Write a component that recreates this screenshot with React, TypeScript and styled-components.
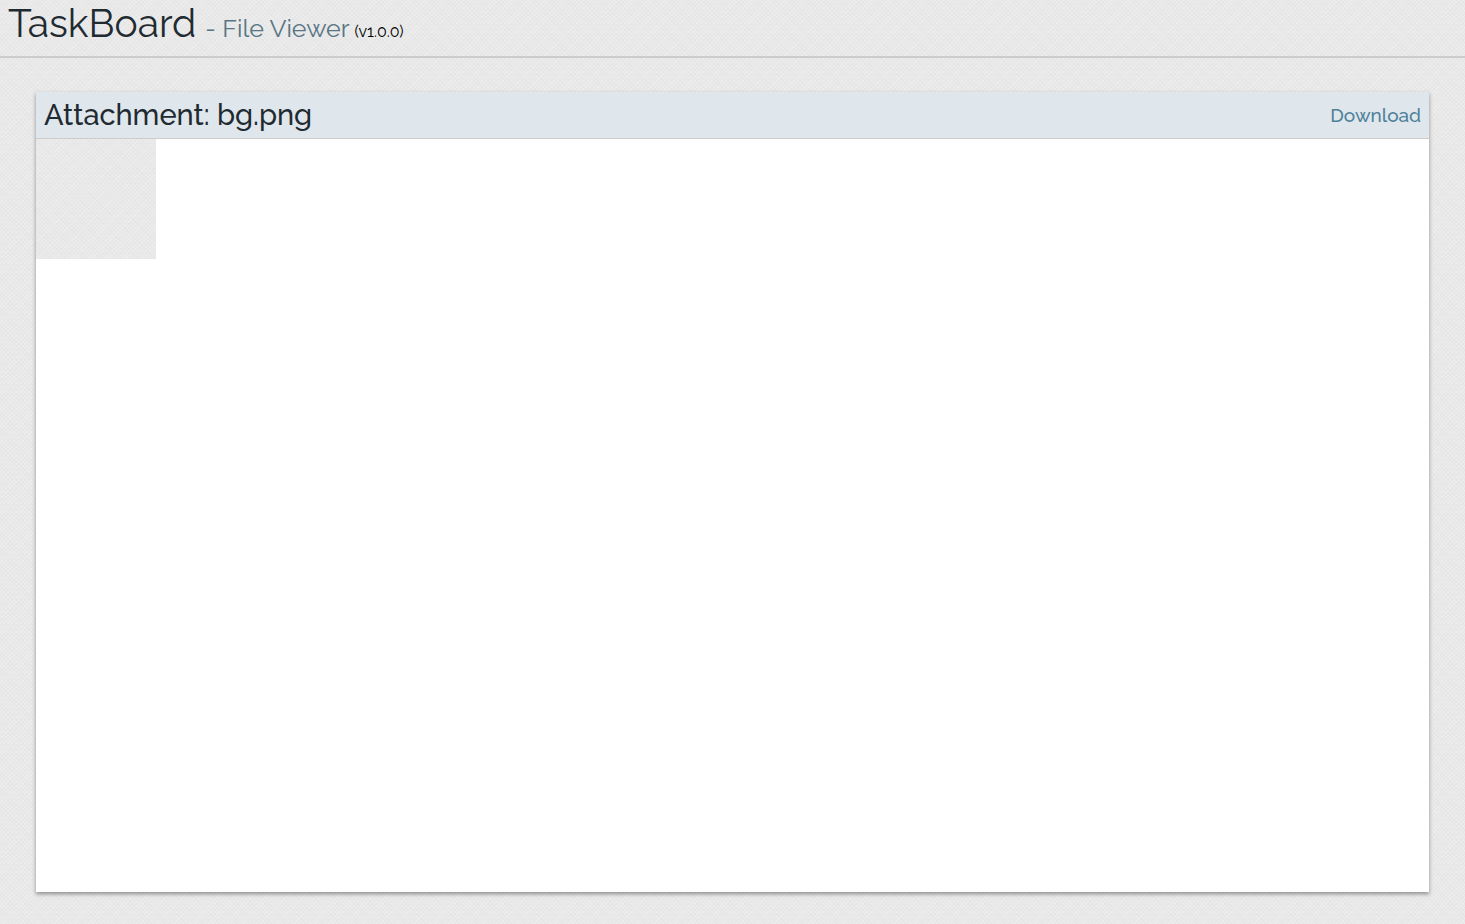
import React from "react";
import styled, { createGlobalStyle, css } from "styled-components";

const weave = css`
  background-color: #e9e9e9;
  background-image:
    repeating-linear-gradient(45deg, rgba(0, 0, 0, 0.014) 0 1px, transparent 1px 3px),
    repeating-linear-gradient(-45deg, rgba(255, 255, 255, 0.2) 0 1px, transparent 1px 3px),
    repeating-linear-gradient(0deg, rgba(0, 0, 0, 0.008) 0 1px, transparent 1px 5px);
  background-size: 120px 120px;
`;

const GlobalStyle = createGlobalStyle`
  *, *::before, *::after { box-sizing: border-box; }
  body {
    margin: 0;
    font-family: Raleway, Lato, "Liberation Sans", sans-serif;
    font-weight: 400;
    color: #1f2b31;
    ${weave}
  }
`;

const Page = styled.div`
  display: flex;
  flex-direction: column;
  min-height: 100vh;
`;

const TopBar = styled.header`
  display: flex;
  align-items: baseline;
  height: 58px;
  padding: 0 8px;
  border-bottom: 2px solid #cccccc;
  white-space: nowrap;
`;

const Brand = styled.h1`
  margin: 0;
  font-size: 39px;
  font-weight: 400;
  line-height: 47px;
`;

const Section = styled.span`
  margin-left: 9px;
  font-size: 25px;
  color: #587584;
`;

const Version = styled.small`
  margin-left: 5px;
  font-size: 16px;
  color: #000000;
`;

const Panel = styled.main`
  display: flex;
  flex: 1;
  flex-direction: column;
  margin: 34px 36px 32px;
  background: #ffffff;
  box-shadow: 0 2px 4px rgba(0, 0, 0, 0.4);
`;

const PanelHeader = styled.div`
  display: flex;
  align-items: center;
  justify-content: space-between;
  height: 47px;
  padding: 0 8px;
  background: #dfe7ed;
  border-bottom: 1px solid #cccccc;
`;

const FileTitle = styled.h2`
  margin: 0;
  font-size: 29px;
  font-weight: 500;
  line-height: 40px;
`;

const DownloadLink = styled.a`
  font-size: 19px;
  font-weight: 500;
  line-height: 28px;
  color: #4f819a;
  text-decoration: none;

  &:hover {
    text-decoration: underline;
  }
`;

const Preview = styled.div`
  width: 120px;
  height: 120px;
  ${weave}
`;

export default function App() {
  return (
    <>
      <GlobalStyle />
      <Page>
        <TopBar>
          <Brand>TaskBoard</Brand>
          <Section>- File Viewer</Section>
          <Version>(v1.0.0)</Version>
        </TopBar>
        <Panel>
          <PanelHeader>
            <FileTitle id="file-title">Attachment: bg.png</FileTitle>
            <DownloadLink href="#download">Download</DownloadLink>
          </PanelHeader>
          <Preview role="img" aria-labelledby="file-title" />
        </Panel>
      </Page>
    </>
  );
}
